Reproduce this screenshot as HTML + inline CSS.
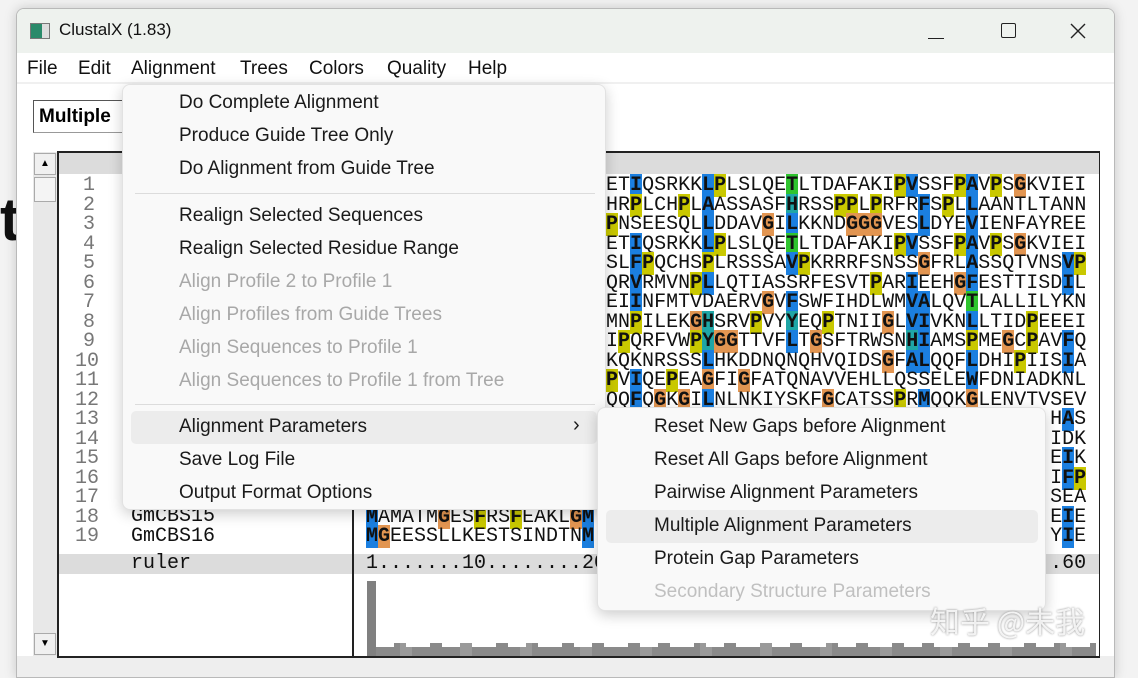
<!DOCTYPE html>
<html><head><meta charset="utf-8"><style>
*{margin:0;padding:0;box-sizing:border-box}
body{width:1138px;height:663px;overflow:hidden;background:#f3f3f3;position:relative;font-family:"Liberation Sans","Noto Sans CJK SC",sans-serif}
.abs{position:absolute}
.win{left:16px;top:8px;width:1099px;height:670px;background:#fff;border:1px solid #b9b9b9;border-radius:8px 8px 0 0;overflow:hidden;box-shadow:0 0 12px rgba(0,0,0,.18)}
.title{left:0;top:0;width:100%;height:44px;background:#eef2ee}
.mb{left:0;top:44px;width:100%;height:31px;background:#fff;border-bottom:2px solid #f0f0f0;font-size:19px;color:#111}
.mb span{position:absolute;top:5px}
.mono{font-family:"Liberation Mono",monospace;font-size:20px;line-height:19.5px;white-space:pre;color:#111}
.b{background:#1b7fe0}.y{background:#c9c800}.o{background:#e29551}.g{background:#2fc42f}.c{background:#1fa6a6}
.menu{background:#f9f9f9;border:1px solid #e2e2e2;border-radius:8px;box-shadow:0 4px 14px rgba(0,0,0,.2);font-size:19px;color:#1a1a1a}
.menu div.i{position:absolute;white-space:nowrap}
.dis{color:#a8a8a8}
.sep{position:absolute;height:1px;background:#dcdcdc}
.hl{position:absolute;background:#ececec;border-radius:5px}
</style></head><body>
<div class="abs" style="left:0;top:195px;font-size:60px;font-weight:bold;color:#111;line-height:50px">t</div>
<div class="abs win">
 <div class="abs title">
  <div class="abs" style="left:13px;top:14px;width:20px;height:16px;border:1px solid #777;background:linear-gradient(90deg,#2a8a6a 60%,#ddd 60%)"></div>
  <div class="abs" style="left:42px;top:11px;font-size:17px;color:#111">ClustalX (1.83)</div>
  <div class="abs" style="left:911px;top:29px;width:16px;height:1px;background:#222"></div>
  <div class="abs" style="left:984px;top:14px;width:15px;height:15px;border:1.3px solid #222;border-radius:2px"></div>
  <svg class="abs" style="left:1053px;top:14px" width="16" height="16"><path d="M1 1L15 15M15 1L1 15" stroke="#222" stroke-width="1.4"/></svg>
 </div>
 <div class="abs mb"><span style="left:10px">File</span><span style="left:61px">Edit</span><span style="left:114px">Alignment</span><span style="left:223px">Trees</span><span style="left:292px">Colors</span><span style="left:370px">Quality</span><span style="left:451px">Help</span></div>
 <div class="abs" style="left:16px;top:91px;width:96px;height:33px;border:1px solid #999;border-top-color:#555;border-left-color:#555;background:#fff;font-size:19px;font-weight:bold;padding:5px 0 0 5px">Multiple</div>
 <div class="abs" style="left:16px;top:143px;width:24px;height:504px;background:#e8e8e8"></div>
 <div class="abs" style="left:17px;top:144px;width:22px;height:22px;background:#f0f0f0;border:1px solid #aaa;font-size:10px;text-align:center;line-height:20px">▲</div>
 <div class="abs" style="left:17px;top:168px;width:22px;height:25px;background:#f4f4f4;border:1px solid #aaa"></div>
 <div class="abs" style="left:17px;top:624px;width:22px;height:22px;background:#f0f0f0;border:1px solid #aaa;font-size:10px;text-align:center;line-height:20px">▼</div>
 <div class="abs" style="left:40px;top:142px;width:1043px;height:520px;border:2px solid #222;border-right-width:1px;background:#fff"></div>
 <div class="abs" style="left:42px;top:144px;width:1040px;height:21px;background:#dcdcdc"></div>
 <div class="abs" style="left:42px;top:545px;width:1040px;height:20px;background:#dcdcdc"></div>
 <div class="abs" style="left:335px;top:144px;width:2px;height:510px;background:#222"></div>
 <div class="abs" style="left:0;top:647px;width:1099px;height:30px;background:#eee"></div>
 <div class="abs" style="left:40px;top:647px;width:1043px;height:2px;background:#222"></div>
 <div class="abs" style="left:350px;top:572px;width:9px;height:75px;background:#808080"></div>
 <div class="abs" style="left:359px;top:634px;width:720px;height:13px;background:repeating-linear-gradient(90deg,#8a8a8a 0 24px,#9a9a9a 24px 36px,#8a8a8a 36px 60px)"></div>
 <div class="abs" style="left:359px;top:634px;width:720px;height:4px;background:repeating-linear-gradient(90deg,#fff 0 18px,transparent 18px 30px,#fff 30px 54px,transparent 54px 66px)"></div>
</div>
<div class="abs mono" style="left:75px;top:176px;color:#777;text-align:right;width:20px">1
2
3
4
5
6
7
8
9
10
11
12
13
14
15
16
17
18
19</div>
<div class="abs mono" style="left:131px;top:507px">GmCBS15
GmCBS16</div>
<div class="abs mono" style="left:131px;top:554px">ruler</div>
<div class="abs mono" style="left:366px;top:554px">1.......10........20........30........40........50........60</div>
<div class="abs mono" style="left:366px;top:176px">                    ET<b class="b">I</b>QSRKK<b class="b">L</b><b class="y">P</b>LSLQE<b class="g">T</b>LTDAFAKI<b class="y">P</b><b class="b">V</b>SSF<b class="y">P</b><b class="b">A</b>V<b class="y">P</b>S<b class="o">G</b>KVIEI
                    HR<b class="y">P</b>LCH<b class="y">P</b>L<b class="b">A</b>ASSASF<b class="c">H</b>RSS<b class="y">PP</b>L<b class="y">P</b>RFR<b class="b">F</b>S<b class="y">P</b>L<b class="b">L</b>AANTLTANN
                    <b class="y">P</b>NSEESQL<b class="b">L</b>DDAV<b class="o">G</b>I<b class="b">L</b>KKND<b class="o">GGG</b>VES<b class="b">L</b>DYE<b class="b">V</b>IENFAYREE
                    ET<b class="b">I</b>QSRKK<b class="b">L</b><b class="y">P</b>LSLQE<b class="g">T</b>LTDAFAKI<b class="y">P</b><b class="b">V</b>SSF<b class="y">P</b><b class="b">A</b>V<b class="y">P</b>S<b class="o">G</b>KVIEI
                    SL<b class="b">F</b><b class="y">P</b>QCHS<b class="y">P</b>LRSSSA<b class="b">V</b><b class="y">P</b>KRRRFSNSS<b class="o">G</b>FRL<b class="b">A</b>SSQTVNS<b class="b">V</b><b class="y">P</b>
                    QR<b class="b">V</b>RMVN<b class="y">P</b><b class="b">L</b>LQTIASSRFESVT<b class="y">P</b>AR<b class="b">I</b>EEH<b class="o">G</b><b class="b">F</b>ESTTISD<b class="b">I</b>L
                    EI<b class="b">I</b>NFMTVDAERV<b class="o">G</b>V<b class="b">F</b>SWFIHDLWM<b class="b">VA</b>LQV<b class="g">T</b>LALLILYKN
                    MN<b class="y">P</b>ILEK<b class="o">G</b><b class="c">H</b>SRV<b class="y">P</b>VY<b class="c">Y</b>EQ<b class="y">P</b>TNII<b class="o">G</b>L<b class="b">VI</b>VKN<b class="b">L</b>LTID<b class="y">P</b>EEEI
                    I<b class="y">P</b>QRFVW<b class="y">P</b><b class="c">Y</b><b class="o">GG</b>TTVF<b class="b">L</b>T<b class="o">G</b>SFTRWSN<b class="c">H</b><b class="b">I</b>AMS<b class="y">P</b>ME<b class="o">G</b>C<b class="y">P</b>AV<b class="b">F</b>Q
                    KQKNRSSS<b class="b">L</b>HKDDNQNQHVQIDS<b class="o">G</b>F<b class="b">AL</b>QQF<b class="b">L</b>DHI<b class="y">P</b>IIS<b class="b">I</b>A
                    <b class="y">P</b>V<b class="b">I</b>QE<b class="y">P</b>EA<b class="o">G</b>FI<b class="o">G</b>FATQNAVVEHLLQSSELE<b class="b">W</b>FDNIADKNL
                    QQ<b class="b">F</b>Q<b class="o">G</b>K<b class="o">G</b>I<b class="b">L</b>NLNKIYSKF<b class="o">G</b>CATSS<b class="y">P</b>R<b class="b">M</b>QQK<b class="o">G</b>LENVTVSEV
                                                         H<b class="b">A</b>S
                                                         IDK
                                                         E<b class="b">I</b>K
                                                         I<b class="b">F</b><b class="y">P</b>
                                                         SEA
<b class="b">M</b>AMATM<b class="o">G</b>ES<b class="y">F</b>RS<b class="y">F</b>EAKL<b class="o">G</b><b class="b">M</b>                                      E<b class="b">I</b>E
<b class="b">M</b><b class="o">G</b>EESSLLKESTSINDTN<b class="b">M</b>                                      Y<b class="b">I</b>E</div>
<div class="abs menu" style="left:122px;top:84px;width:484px;height:426px">
 <div class="i" style="left:56px;top:7px">Do Complete Alignment</div>
 <div class="i" style="left:56px;top:40px">Produce Guide Tree Only</div>
 <div class="i" style="left:56px;top:73px">Do Alignment from Guide Tree</div>
 <div class="sep" style="left:12px;top:108px;width:460px"></div>
 <div class="i" style="left:56px;top:120px">Realign Selected Sequences</div>
 <div class="i" style="left:56px;top:153px">Realign Selected Residue Range</div>
 <div class="i dis" style="left:56px;top:186px">Align Profile 2 to Profile 1</div>
 <div class="i dis" style="left:56px;top:219px">Align Profiles from Guide Trees</div>
 <div class="i dis" style="left:56px;top:252px">Align Sequences to Profile 1</div>
 <div class="i dis" style="left:56px;top:285px">Align Sequences to Profile 1 from Tree</div>
 <div class="sep" style="left:12px;top:319px;width:460px"></div>
 <div class="hl" style="left:8px;top:326px;width:466px;height:33px"></div>
 <div class="i" style="left:56px;top:331px">Alignment Parameters</div>
 <div class="i" style="left:450px;top:329px;font-size:20px">›</div>
 <div class="i" style="left:56px;top:364px">Save Log File</div>
 <div class="i" style="left:56px;top:397px">Output Format Options</div>
</div>
<div class="abs menu" style="left:597px;top:407px;width:449px;height:204px">
 <div class="i" style="left:56px;top:8px">Reset New Gaps before Alignment</div>
 <div class="i" style="left:56px;top:41px">Reset All Gaps before Alignment</div>
 <div class="i" style="left:56px;top:74px">Pairwise Alignment Parameters</div>
 <div class="hl" style="left:8px;top:102px;width:432px;height:33px"></div>
 <div class="i" style="left:56px;top:107px">Multiple Alignment Parameters</div>
 <div class="i" style="left:56px;top:140px">Protein Gap Parameters</div>
 <div class="i dis" style="left:56px;top:173px;color:#c0c0c0">Secondary Structure Parameters</div>
</div>
<div class="abs" style="left:930px;top:598px;font-size:30px;color:rgba(255,255,255,.85);text-shadow:0 0 2px #888;font-family:'Noto Sans CJK SC',sans-serif">知乎 @未我</div>
</body></html>
